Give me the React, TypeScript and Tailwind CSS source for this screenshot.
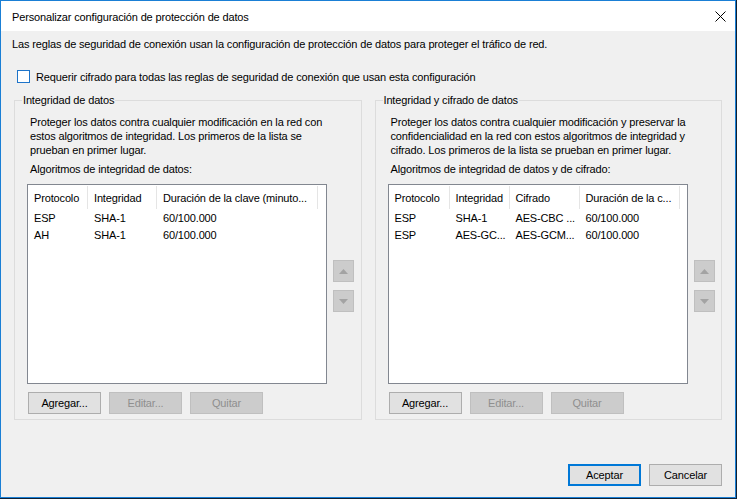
function ArrowButton({ up }: { up?: boolean }) {
	return (
		<div className="flex h-[22px] w-[21px] items-center justify-center border border-[#bfbfbf] bg-[#cccccc]">
			<svg width="9" height="5" viewBox="0 0 9 5" aria-hidden="true">
				{up ? (
					<polygon points="4.5,0 9,5 0,5" fill="#a3a3a3" />
				) : (
					<polygon points="0,0 9,0 4.5,5" fill="#a3a3a3" />
				)}
			</svg>
		</div>
	)
}

function Button({
	label,
	disabled,
	primary,
}: { label: string; disabled?: boolean; primary?: boolean }) {
	let cls = 'border-[#adadad] bg-[#e1e1e1] text-black'
	if (disabled) cls = 'border-[#bfbfbf] bg-[#cccccc] text-[#8f8f8f]'
	if (primary) cls = 'border-2 border-[#0078d7] bg-[#e1e1e1] text-black'
	return (
		<div
			className={`flex h-[22px] w-[73px] items-center justify-center border leading-[13px] ${cls}`}
		>
			{label}
		</div>
	)
}

type Col = { title: string; w: string }

function ListView({ cols, rows }: { cols: Col[]; rows: string[][] }) {
	return (
		<div className="h-[200px] w-[300px] border border-[#828790] bg-white">
			<div className="flex h-[25px]">
				{cols.map((c) => (
					<div key={c.title} className={`flex shrink-0 items-start ${c.w}`}>
						<span className="flex-1 overflow-hidden whitespace-nowrap pt-[7px] pl-[6px] leading-[13px]">
							{c.title}
						</span>
						<span className="mt-[1px] h-[23px] w-px bg-[#e5e5e5]" />
					</div>
				))}
			</div>
			{rows.map((r, i) => (
				<div key={i} className="flex h-[17px] leading-[17px]">
					{r.map((cell, j) => (
						<div
							key={j}
							className={`shrink-0 overflow-hidden whitespace-nowrap pl-[6px] ${cols[j].w}`}
						>
							{cell}
						</div>
					))}
				</div>
			))}
		</div>
	)
}

function Group({
	legend,
	lines,
	listLabel,
	cols,
	rows,
}: {
	legend: string
	lines: string[]
	listLabel: string
	cols: Col[]
	rows: string[][]
}) {
	return (
		<fieldset className="h-[326px] w-[349px] border border-[#dcdcdc]">
			<legend className="ml-[7px] px-[1px] leading-[13px]">{legend}</legend>
			<p className="mt-[8px] ml-[15px] leading-[14px]">
				{lines.map((l, i) => (
					<span key={i} className="block whitespace-nowrap">
						{l}
					</span>
				))}
			</p>
			<p className="mt-[6px] ml-[15px] leading-[13px]">{listLabel}</p>
			<div className="mt-[8px] ml-[12px] flex">
				<ListView cols={cols} rows={rows} />
				<div className="mt-[76px] ml-[6px] flex flex-col gap-[8px]">
					<ArrowButton up />
					<ArrowButton />
				</div>
			</div>
			<div className="mt-[8px] ml-[13px] flex gap-[8px]">
				<Button label="Agregar..." />
				<Button label="Editar..." disabled />
				<Button label="Quitar" disabled />
			</div>
		</fieldset>
	)
}

export default function App() {
	return (
		<div className="h-[499px] w-[737px] bg-[#0e2034] font-['Liberation_Sans',Arial,sans-serif] text-[11px] tracking-[-0.15px] text-black">
			<div className="flex h-[498px] w-[736px] flex-col border border-[#1a7fd5] bg-[#f0f0f0]">
				<div className="flex h-[30px] shrink-0 items-center justify-between bg-white pt-[2px] pr-[9px] pl-[11px]">
					<span className="leading-[13px]">
						Personalizar configuración de protección de datos
					</span>
					<svg width="11" height="11" viewBox="0 0 11 11" aria-hidden="true" className="-mt-[2px]">
						<path d="M0.5 0.5 L10.5 10.5 M10.5 0.5 L0.5 10.5" stroke="#000" strokeWidth="1" />
					</svg>
				</div>
				<div className="flex flex-1 flex-col px-[13px]">
					<p className="mt-[7px] -ml-[2px] leading-[13px]">
						Las reglas de seguridad de conexión usan la configuración de protección de
						datos para proteger el tráfico de red.
					</p>
					<label className="mt-[19px] flex items-start">
						<span className="ml-[3px] h-[13px] w-[13px] border border-[#1e74c9] bg-white" />
						<span className="ml-[6px] pt-[1px] leading-[13px]">
							Requerir cifrado para todas las reglas de seguridad de conexión que usan esta
							configuración
						</span>
					</label>
					<div className="mt-[10px] flex gap-[13px]">
						<Group
							legend="Integridad de datos"
							lines={[
								'Proteger los datos contra cualquier modificación en la red con',
								'estos algoritmos de integridad. Los primeros de la lista se',
								'prueban en primer lugar.',
							]}
							listLabel="Algoritmos de integridad de datos:"
							cols={[
								{ title: 'Protocolo', w: 'w-[60px]' },
								{ title: 'Integridad', w: 'w-[69px]' },
								{ title: 'Duración de la clave (minuto...', w: 'w-[161px]' },
							]}
							rows={[
								['ESP', 'SHA-1', '60/100.000'],
								['AH', 'SHA-1', '60/100.000'],
							]}
						/>
						<Group
							legend="Integridad y cifrado de datos"
							lines={[
								'Proteger los datos contra cualquier modificación y preservar la',
								'confidencialidad en la red con estos algoritmos de integridad y',
								'cifrado. Los primeros de la lista se prueban en primer lugar.',
							]}
							listLabel="Algoritmos de integridad de datos y de cifrado:"
							cols={[
								{ title: 'Protocolo', w: 'w-[61px]' },
								{ title: 'Integridad', w: 'w-[60px]' },
								{ title: 'Cifrado', w: 'w-[70px]' },
								{ title: 'Duración de la c...', w: 'w-[100px]' },
							]}
							rows={[
								['ESP', 'SHA-1', 'AES-CBC ...', '60/100.000'],
								['ESP', 'AES-GC...', 'AES-GCM...', '60/100.000'],
							]}
						/>
					</div>
					<div className="mt-auto mb-[11px] flex justify-end gap-[8px]">
						<Button label="Aceptar" primary />
						<Button label="Cancelar" />
					</div>
				</div>
			</div>
		</div>
	)
}
